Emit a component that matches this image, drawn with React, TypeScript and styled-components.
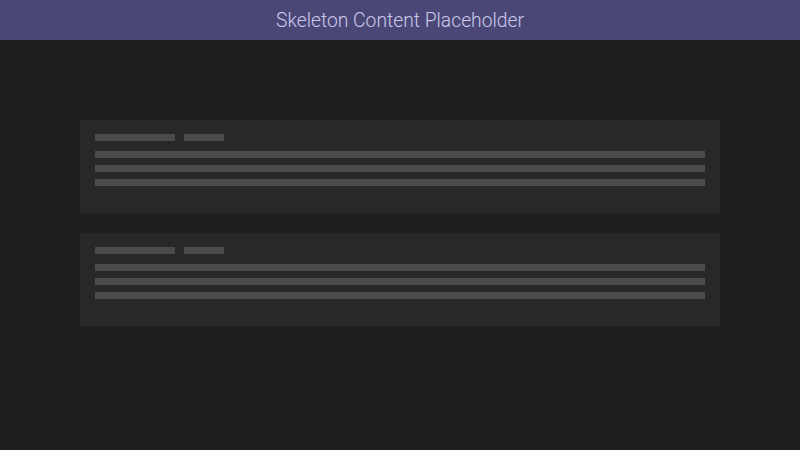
import React from "react";
import styled, { createGlobalStyle } from "styled-components";

const GlobalStyle = createGlobalStyle`
  html, body {
    margin: 0;
    padding: 0;
    background: #1f1f1f;
    font-family: Roboto, "Liberation Sans", sans-serif;
  }
  #root {
    min-height: 100vh;
  }
`;

const Header = styled.header`
  height: 40px;
  background: #4a4777;
  display: flex;
  align-items: center;
  justify-content: center;
`;

const Title = styled.h1`
  margin: 0;
  font-size: 19.3px;
  font-weight: 300;
  color: #cbc9ea;
`;

const List = styled.main`
  width: 640px;
  margin: 80px auto 0;
  display: flex;
  flex-direction: column;
  gap: 20px;
`;

const Card = styled.section`
  background: #282828;
  height: 93px;
  box-sizing: border-box;
  padding: 14px 15px 0;
  display: flex;
  flex-direction: column;
`;

const TopRow = styled.div`
  display: flex;
  gap: 9px;
  margin-bottom: 10px;
`;

const Bar = styled.div<{ $width?: number }>`
  height: 7px;
  width: ${({ $width }) => ($width ? `${$width}px` : "100%")};
  background: #4a4a4a;
`;

const Lines = styled.div`
  display: flex;
  flex-direction: column;
  gap: 7px;
`;

const Line = styled(Bar)`
  background: #4b4b4b;
`;

const SkeletonCard: React.FC = () => (
  <Card>
    <TopRow>
      <Bar $width={80} />
      <Bar $width={40} />
    </TopRow>
    <Lines>
      <Line />
      <Line />
      <Line />
    </Lines>
  </Card>
);

export default function App() {
  return (
    <>
      <GlobalStyle />
      <Header>
        <Title>Skeleton Content Placeholder</Title>
      </Header>
      <List>
        <SkeletonCard />
        <SkeletonCard />
      </List>
    </>
  );
}
